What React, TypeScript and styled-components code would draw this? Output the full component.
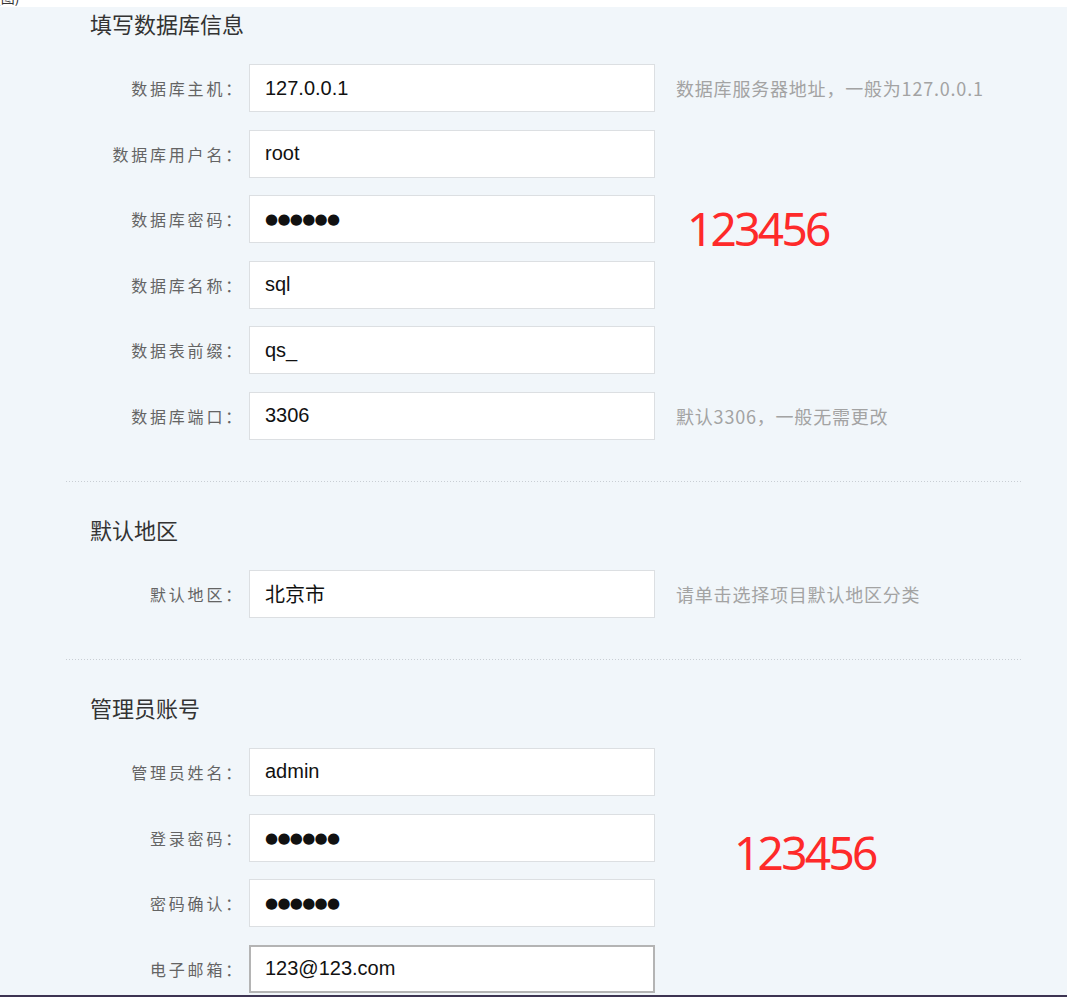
import { FC } from 'react';
import styled, { createGlobalStyle } from 'styled-components';

const GlobalStyle = createGlobalStyle`
  html, body {
    margin: 0;
    padding: 0;
    background: #ffffff;
    font-family: "Noto Sans CJK SC", "Noto Sans", sans-serif;
  }
`;

const Page = styled.div`
  height: 100vh;
  display: flex;
  flex-direction: column;
  overflow: hidden;
`;

const TopStrip = styled.div`
  height: 7px;
  flex: none;
  overflow: hidden;
  background: #ffffff;
`;

const Clipped = styled.span`
  display: block;
  margin: -12px 0 0 -4px;
  font-size: 14px;
  line-height: 18px;
  color: #333;
`;

const Main = styled.div`
  flex: 1;
  min-height: 0;
  overflow: hidden;
  background: #f1f6fa;
  padding-left: 66px;
`;

const BottomBar = styled.div`
  height: 2px;
  flex: none;
  background: #3d3452;
`;

const Section = styled.section<{ $first?: boolean; $divider?: boolean }>`
  width: 957px;
  padding-top: ${(p) => (p.$first ? '0' : '31px')};
  padding-bottom: 42px;
  background: ${(p) =>
    p.$divider
      ? 'repeating-linear-gradient(to right, #c9ced4 0 1px, transparent 1px 3px) bottom / 100% 1px no-repeat'
      : 'none'};
`;

const Heading = styled.h3`
  margin: 0 0 23px;
  padding-left: 24px;
  height: 34px;
  line-height: 32px;
  font-size: 22px;
  font-weight: normal;
  color: #333;
`;

const Fields = styled.div`
  display: flex;
  flex-direction: column;
  gap: 17.6px;
`;

const Row = styled.div`
  display: flex;
  align-items: center;
  height: 48px;
`;

const Label = styled.label`
  width: 178px;
  margin-right: 5px;
  text-align: right;
  font-size: 16px;
  letter-spacing: 2.8px;
  color: #646464;
  white-space: nowrap;
`;

const Input = styled.input<{ $focused?: boolean; $secret?: boolean }>`
  box-sizing: border-box;
  width: 406px;
  height: 48px;
  margin: 0;
  padding: 0 ${(p) => (p.$focused ? '14px' : '15px')};
  border: ${(p) => (p.$focused ? '2px solid #b4b4b4' : '1px solid #dcdfe2')};
  background: #ffffff;
  outline: none;
  color: #111;
  font-family: ${(p) =>
    p.$secret ? '"DejaVu Sans", sans-serif' : '"Liberation Sans", "Noto Sans CJK SC", sans-serif'};
  font-size: ${(p) => (p.$secret ? '15px' : '20px')};
  letter-spacing: ${(p) => (p.$secret ? '-0.7px' : '0')};
`;

const Hint = styled.span`
  margin-left: 21px;
  font-size: 18px;
  letter-spacing: 0.8px;
  color: #a3a3a3;
  white-space: nowrap;
`;

const Note = styled.span<{ $x: number; $y: number }>`
  margin-left: ${(p) => 34 + p.$x}px;
  margin-top: ${(p) => p.$y}px;
  font-family: "Noto Sans", sans-serif;
  font-size: 46px;
  line-height: 1;
  letter-spacing: -2.7px;
  color: #fe2a2a;
  white-space: nowrap;
`;

type Field = {
  label: string;
  value: string;
  secret?: boolean;
  focused?: boolean;
  hint?: string;
  note?: { x: number; y: number };
};

type Group = { title: string; fields: Field[] };

const DOTS = '●●●●●●';

const groups: Group[] = [
  {
    title: '填写数据库信息',
    fields: [
      { label: '数据库主机：', value: '127.0.0.1', hint: '数据库服务器地址，一般为127.0.0.1' },
      { label: '数据库用户名：', value: 'root' },
      { label: '数据库密码：', value: DOTS, secret: true, note: { x: -2, y: 17 } },
      { label: '数据库名称：', value: 'sql' },
      { label: '数据表前缀：', value: 'qs_' },
      { label: '数据库端口：', value: '3306', hint: '默认3306，一般无需更改' },
    ],
  },
  {
    title: '默认地区',
    fields: [{ label: '默认地区：', value: '北京市', hint: '请单击选择项目默认地区分类' }],
  },
  {
    title: '管理员账号',
    fields: [
      { label: '管理员姓名：', value: 'admin' },
      { label: '登录密码：', value: DOTS, secret: true, note: { x: 45, y: 29 } },
      { label: '密码确认：', value: DOTS, secret: true },
      { label: '电子邮箱：', value: '123@123.com', focused: true },
    ],
  },
];

const App: FC = () => {
  return (
    <Page>
      <GlobalStyle />
      <TopStrip>
        <Clipped>(图)</Clipped>
      </TopStrip>
      <Main>
        {groups.map((g, gi) => (
          <Section key={g.title} $first={gi === 0} $divider={gi < groups.length - 1}>
            <Heading>{g.title}</Heading>
            <Fields>
              {g.fields.map((f) => (
                <Row key={f.label}>
                  <Label>{f.label}</Label>
                  <Input readOnly defaultValue={f.value} $secret={f.secret} $focused={f.focused} />
                  {f.hint && <Hint>{f.hint}</Hint>}
                  {f.note && (
                    <Note $x={f.note.x} $y={f.note.y}>
                      123456
                    </Note>
                  )}
                </Row>
              ))}
            </Fields>
          </Section>
        ))}
      </Main>
      <BottomBar />
    </Page>
  );
};

export default App;
